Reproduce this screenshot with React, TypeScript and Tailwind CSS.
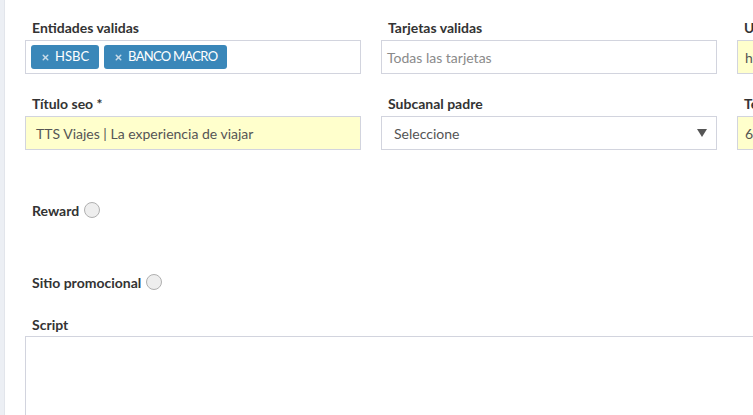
import { X } from "lucide-react";

const font = { fontFamily: "Lato, 'Open Sans', sans-serif" };

const Label = ({ children }: { children: React.ReactNode }) => (
  <div className="h-[18px] leading-[18px] pl-[7px] mb-[3px] text-[14px] font-bold text-[#333]">
    {children}
  </div>
);

const Tag = ({ text, className = "" }: { text: string; className?: string }) => (
  <span className={"flex items-center gap-[5px] h-6 px-[10px] rounded-[3px] bg-[#3a87b9] text-white text-[13px] " + className}>
    <X className="w-[9px] h-[9px] text-[#c9dbe8]" strokeWidth={4} />
    {text}
  </span>
);

const Radio = () => (
  <span className="inline-block w-[16px] h-[16px] rounded-full bg-[#eeeeee] border border-[#b0b0b0]" />
);

const App = () => {
  return (
    <div className="flex w-[753px] h-[415px] overflow-hidden bg-white" style={font}>
      {/* Side strip */}
      <div className="w-[5px] shrink-0 bg-[#eceff4] border-r border-[#e2e5eb]" />

      <div className="pl-5 pt-[19px] shrink-0">
        <div className="grid grid-cols-[336px_336px_336px] gap-x-5">
          <div>
            <Label>Entidades validas</Label>
            <div className="h-[34px] border border-[#d2d4de] flex items-center gap-[5px] px-[5px]">
              <Tag text="HSBC" />
              <Tag text="BANCO MACRO" className="tracking-[-0.7px]" />
            </div>
          </div>
          <div>
            <Label>Tarjetas validas</Label>
            <div className="h-[34px] border border-[#d2d4de] flex items-center px-[5px] text-[14px] text-[#8a8a8a]">
              Todas las tarjetas
            </div>
          </div>
          <div>
            <Label>Url amigable</Label>
            <div className="h-[34px] border border-[#d2d4de] bg-[#ffffcc] flex items-center px-[7px] text-[14px] text-[#555]">
              https://www.ttsviajes.com
            </div>
          </div>

          <div className="mt-[21px]">
            <Label>Título seo *</Label>
            <div className="h-[34px] border border-[#d2d4de] bg-[#ffffcc] flex items-center px-[10px] text-[14px] text-[#555]">
              TTS Viajes | La experiencia de viajar
            </div>
          </div>
          <div className="mt-[21px]">
            <Label>Subcanal padre</Label>
            <div className="h-[34px] border border-[#d2d4de] flex items-center justify-between pl-[12px] pr-[9px] text-[14px] text-[#555]">
              Seleccione
              <svg width="10" height="8" viewBox="0 0 10 8">
                <path d="M0 0 H10 L5 8 Z" fill="#555" />
              </svg>
            </div>
          </div>
          <div className="mt-[21px]">
            <Label>Teléfono</Label>
            <div className="h-[34px] border border-[#d2d4de] bg-[#ffffcc] flex items-center px-[7px] text-[14px] text-[#555]">
              6800 555 0101
            </div>
          </div>
        </div>

        <div className="mt-[51px] flex items-center gap-[5px] pl-[7px] h-[18px] text-[14px] font-bold text-[#333]">
          Reward <Radio />
        </div>

        <div className="mt-[54px] flex items-center gap-[5px] pl-[7px] h-[18px] text-[14px] font-bold text-[#333]">
          Sitio promocional <Radio />
        </div>

        <div className="mt-[25px]">
          <div className="h-[18px] leading-[18px] pl-[7px] mb-[2px] text-[14px] font-bold text-[#333]">Script</div>
          <textarea className="block w-[1048px] h-[120px] border border-[#d2d4de] resize-none outline-none" />
        </div>
      </div>
    </div>
  );
};

export default App;
